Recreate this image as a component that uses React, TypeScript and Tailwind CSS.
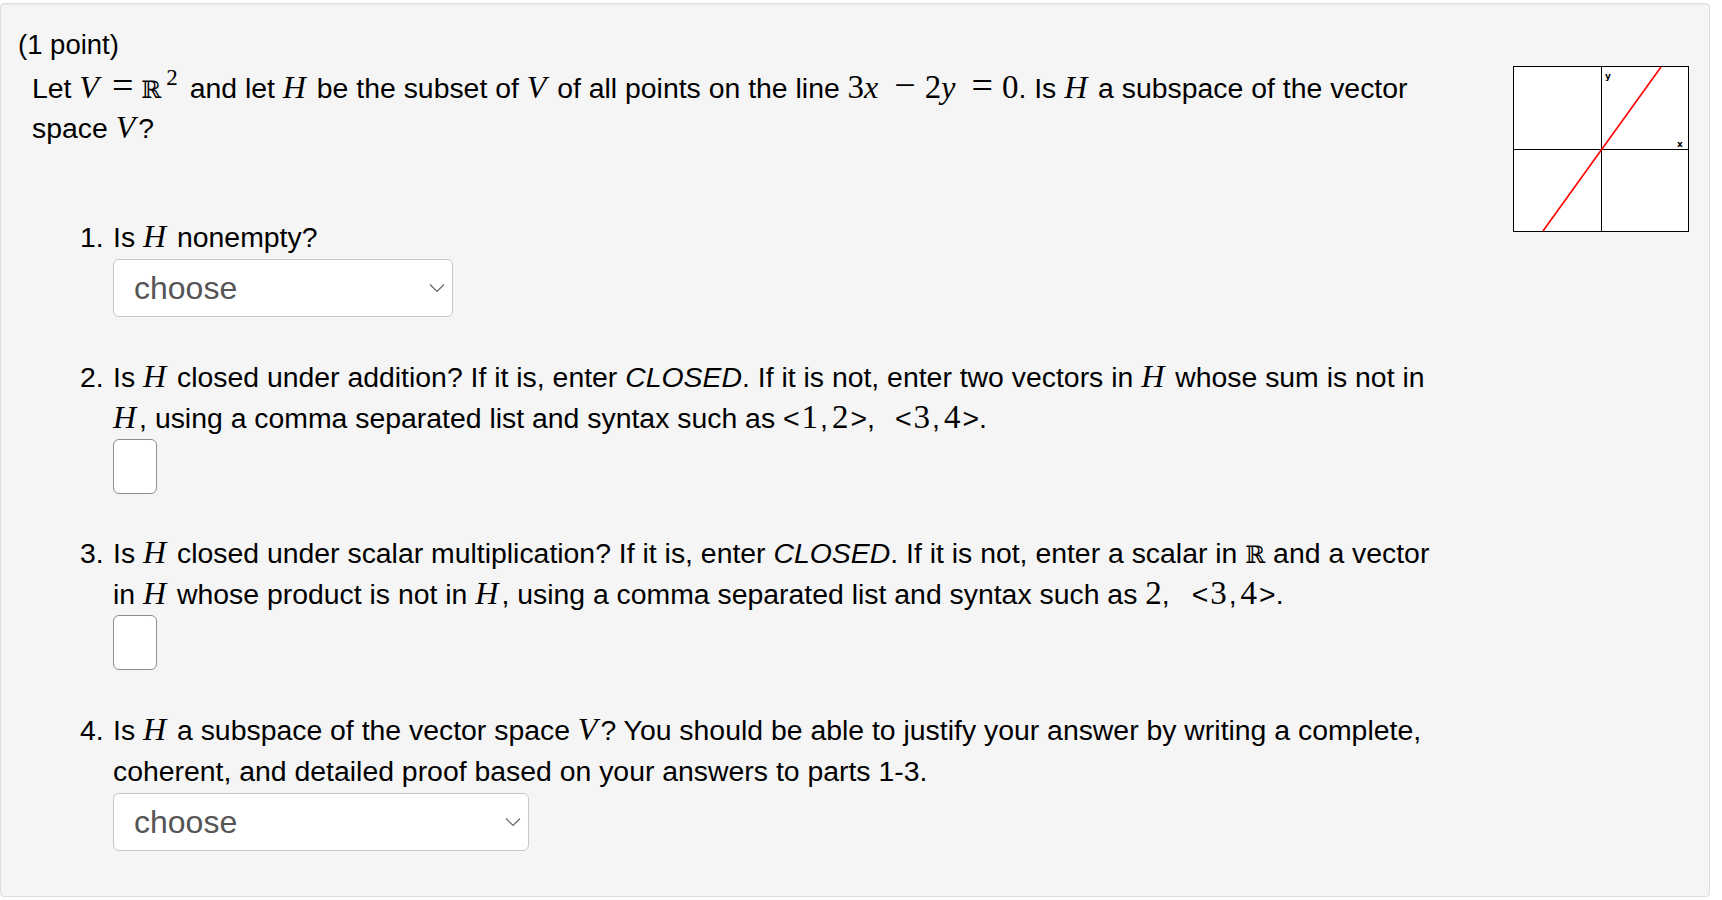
import type { ReactNode } from "react";

// math-ish pieces, sized up like MathJax output next to the text
function Mi({ children }: { children: ReactNode }) {
  return <span className="font-['Liberation_Serif',serif] italic text-[32px] leading-none pr-[3px]">{children}</span>;
}

function Mn({ children }: { children: ReactNode }) {
  return <span className="font-['Liberation_Serif',serif] text-[33px] leading-none">{children}</span>;
}

function Op({ children, wide }: { children: ReactNode; wide?: boolean }) {
  return (
    <span
      className={
        wide
          ? "font-['Liberation_Serif',serif] text-[38px] leading-[30px] ml-[13px] mr-[9px]"
          : "font-['Liberation_Serif',serif] text-[38px] leading-[30px] ml-[10px] mr-[8px]"
      }
    >
      {children}
    </span>
  );
}

function Reals() {
  return <span className="font-['DejaVu_Serif','DejaVu_Sans',serif] text-[24px] leading-none">ℝ</span>;
}

// <a,b> as the answer hint shows it
function Vec({ a, b }: { a: string; b: string }) {
  return (
    <span>
      &lt;<span className="px-[2px]"><Mn>{a}</Mn></span>
      <span className="pr-[2px]">,</span>
      <span className="px-[2px]"><Mn>{b}</Mn></span>&gt;
    </span>
  );
}

function Choose({ width }: { width: string }) {
  return (
    <div className={`relative ${width} h-[58px] mt-[2px]`}>
      <select
        defaultValue=""
        className="h-full w-full appearance-none rounded-[6px] border border-[#c8c8c8] bg-white pl-[20px] text-[32px] text-[#555] font-['Liberation_Sans',sans-serif] outline-none"
      >
        <option value="">choose</option>
        <option value="yes">Yes</option>
        <option value="no">No</option>
      </select>
      <svg
        className="pointer-events-none absolute right-[8px] top-[24px]"
        width="16"
        height="10"
        viewBox="0 0 16 10"
        fill="none"
        stroke="#666"
        strokeWidth="1.2"
      >
        <path d="M1 1.5l7 7 7-7" />
      </svg>
    </div>
  );
}

function Blank() {
  return <input type="text" className="block mt-[1px] h-[55px] w-[44px] rounded-[6px] border border-[#8e8e8e] bg-white" />;
}

function Graph() {
  return (
    <svg className="float-right -mr-[1px] -mt-[2px]" width="176" height="166" viewBox="0 0 176 166">
      <rect x="0.5" y="0.5" width="175" height="165" fill="white" stroke="black" />
      <line x1="88.5" y1="0" x2="88.5" y2="166" stroke="black" />
      <line x1="0" y1="83.5" x2="176" y2="83.5" stroke="black" />
      <line x1="30" y1="165" x2="148" y2="1" stroke="#ff0000" strokeWidth="1.6" />
      <text x="92" y="13" fontSize="9" fontWeight="bold" fontFamily="DejaVu Sans, sans-serif">y</text>
      <text x="164" y="81" fontSize="9" fontWeight="bold" fontFamily="DejaVu Sans, sans-serif">x</text>
    </svg>
  );
}

function Item({ n, children }: { n: number; children: ReactNode }) {
  return (
    <div className="flex ml-[62px]">
      <span className="w-[33px] shrink-0">{n}.</span>
      <div>{children}</div>
    </div>
  );
}

export default function App() {
  return (
    <div className="min-h-screen bg-white text-black font-['Liberation_Sans',Arial,sans-serif] text-[28.4px] leading-[40.5px]">
      <div className="pt-[3px] pr-[12px]">
        <div className="h-[894px] rounded-[4px] border border-[#dedede] bg-[#f5f5f5] pl-[17px] pr-[21px] pt-[21px] shadow-[inset_0_1px_1px_rgba(0,0,0,0.05)]">
          <div className="text-[27.5px]">(1 point)</div>
          <div className="pl-[14px] mt-[2px] whitespace-nowrap">
            <Graph />
            Let <Mi>V</Mi>
            <Op>=</Op>
            <Reals />
            <sup className="font-['Liberation_Serif',serif] text-[23px] -top-[13px] ml-[5px] mr-[4px]">2</sup> and let{" "}
            <Mi>H</Mi> be the subset of <Mi>V</Mi> of all points on the line <Mn>3</Mn>
            <Mi>x</Mi>
            <Op wide>−</Op>
            <Mn>2</Mn>
            <Mi>y</Mi>
            <Op wide>=</Op>
            <Mn>0</Mn>. Is <Mi>H</Mi> a subspace of the vector
            <br />
            space <Mi>V</Mi>?
          </div>

          <div className="mt-[68px] whitespace-nowrap">
            <Item n={1}>
              <div>
                Is <Mi>H</Mi> nonempty?
              </div>
              <Choose width="w-[340px]" />
            </Item>

            <div className="mt-[40px]">
              <Item n={2}>
                <div>
                  Is <Mi>H</Mi> closed under addition? If it is, enter <i>CLOSED</i>. If it is not, enter two vectors in{" "}
                  <Mi>H</Mi> whose sum is not in
                  <br />
                  <Mi>H</Mi>, using a comma separated list and syntax such as <Vec a="1" b="2" />
                  <span className="pr-[20px]">,</span>
                  <Vec a="3" b="4" />.
                </div>
                <Blank />
              </Item>
            </div>

            <div className="mt-[39px]">
              <Item n={3}>
                <div>
                  Is <Mi>H</Mi> closed under scalar multiplication? If it is, enter <i>CLOSED</i>. If it is not, enter a
                  scalar in <Reals /> and a vector
                  <br />
                  in <Mi>H</Mi> whose product is not in <Mi>H</Mi>, using a comma separated list and syntax such as{" "}
                  <Mn>2</Mn>
                  <span className="pr-[22px]">,</span>
                  <Vec a="3" b="4" />.
                </div>
                <Blank />
              </Item>
            </div>

            <div className="mt-[40px]">
              <Item n={4}>
                <div>
                  Is <Mi>H</Mi> a subspace of the vector space <Mi>V</Mi>? You should be able to justify your answer by
                  writing a complete,
                  <br />
                  coherent, and detailed proof based on your answers to parts 1-3.
                </div>
                <Choose width="w-[416px]" />
              </Item>
            </div>
          </div>
        </div>
      </div>
    </div>
  );
}
